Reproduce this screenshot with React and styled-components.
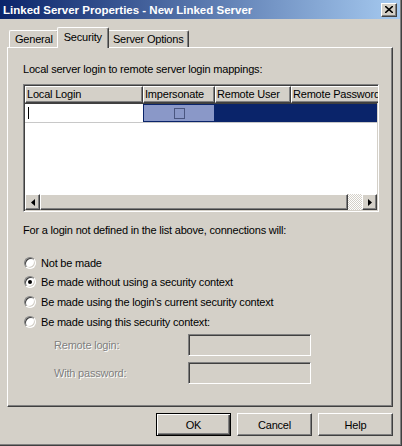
import React from 'react'
import styled, { createGlobalStyle, css } from 'styled-components'

const GlobalStyle = createGlobalStyle`
  html, body {
    margin: 0;
    padding: 0;
    background: #d4d0c8;
  }
  body {
    font-family: "Liberation Sans", Arial, sans-serif;
    font-size: 11px;
    letter-spacing: -0.2px;
    color: #000;
  }
`

const raised = css`
  border: 1px solid;
  border-color: #ffffff #404040 #404040 #ffffff;
  box-shadow: inset -1px -1px #808080, inset 1px 1px #d4d0c8;
`

const sunken = css`
  border: 1px solid;
  border-color: #808080 #ffffff #ffffff #808080;
  box-shadow: inset 1px 1px #404040, inset -1px -1px #d4d0c8;
`

const Window = styled.div`
  width: 402px;
  height: 446px;
  box-sizing: border-box;
  background: #d4d0c8;
  border-right: 1px solid #404040;
  border-bottom: 1px solid #404040;
  box-shadow: inset -1px -1px #808080;
  display: flex;
  flex-direction: column;
`

const TitleBar = styled.div`
  height: 19px;
  flex: none;
  background: linear-gradient(to right, #0a246a, #a6caf0);
  display: flex;
  align-items: center;
  justify-content: space-between;
  padding: 0 3px 0 3px;
  margin-right: 1px;
`

const Title = styled.span`
  color: #fff;
  font-weight: bold;
  font-size: 11.5px;
  letter-spacing: 0;
`

const CloseBtn = styled.div`
  ${raised};
  width: 14px;
  height: 12px;
  background: #d4d0c8;
  display: flex;
  align-items: center;
  justify-content: center;
`

const Body = styled.div`
  padding: 8px 7px 0 7px;
  display: flex;
  flex-direction: column;
`

const TabStrip = styled.div`
  display: flex;
  align-items: flex-end;
  height: 20px;
  padding-left: 2px;
  position: relative;
  z-index: 1;
`

const Tab = styled.div`
  box-sizing: border-box;
  height: ${p => (p.$active ? '21px' : '17px')};
  padding: 0 ${p => (p.$active ? '6px' : '5px')};
  margin: ${p => (p.$active ? '0 -2px -1px -2px' : '0')};
  display: flex;
  align-items: center;
  border-top: 1px solid #fff;
  border-left: 1px solid #fff;
  border-right: 1px solid #404040;
  box-shadow: inset -1px 0 #808080;
  border-radius: 2px 2px 0 0;
  background: #d4d0c8;
  position: relative;
  z-index: ${p => (p.$active ? 2 : 1)};
  padding-bottom: ${p => (p.$active ? '3px' : '0')};
`

const Panel = styled.div`
  box-sizing: border-box;
  height: 360px;
  width: 386px;
  border-top: 1px solid #fff;
  border-left: 1px solid #fff;
  border-right: 1px solid #404040;
  border-bottom: 1px solid #404040;
  box-shadow: inset -1px -1px #808080;
  padding: 15px 0 0 15px;
  display: flex;
  flex-direction: column;
`

const Label = styled.div`
  line-height: 13px;
  height: 13px;
  white-space: nowrap;
  margin-top: ${p => p.$top || 0}px;
`

const Grid = styled.div`
  ${sunken};
  box-sizing: border-box;
  width: 356px;
  height: 128px;
  margin-top: 8px;
  padding: 1px;
  display: flex;
  flex-direction: column;
  background: #fff;
  overflow: hidden;
`

const Row = styled.div`
  display: flex;
  flex: none;
`

const HeadCell = styled.div`
  ${raised};
  box-sizing: border-box;
  width: ${p => p.$w}px;
  flex: none;
  height: 17px;
  background: #d4d0c8;
  padding-left: 1px;
  line-height: 15px;
  white-space: nowrap;
  overflow: hidden;
`

const HeadLine = styled.div`
  height: 1px;
  background: #404040;
  flex: none;
`

const Cell = styled.div`
  box-sizing: border-box;
  width: ${p => p.$w}px;
  flex: ${p => (p.$fill ? '1' : 'none')};
  height: 18px;
  background: ${p => p.$bg};
  border: ${p => (p.$bd ? `1px solid ${p.$bd}` : 'none')};
  display: flex;
  align-items: center;
  justify-content: ${p => (p.$center ? 'center' : 'flex-start')};
`

const Caret = styled.div`
  width: 1px;
  height: 12px;
  background: #000;
  margin-left: 3px;
`

const CheckBox = styled.div`
  width: 9px;
  height: 9px;
  border: 1px solid #4a5680;
  background: #8a98c8;
`

const RowLine = styled.div`
  height: 1px;
  background: #c8c8c8;
  flex: none;
`

const Spacer = styled.div`
  flex: 1;
`

const ScrollBar = styled.div`
  height: 16px;
  flex: none;
  display: flex;
  background-color: #fff;
  background-image: conic-gradient(#d4d0c8 25%, #fff 0 50%, #d4d0c8 0 75%, #fff 0);
  background-size: 2px 2px;
`

const ScrollBtn = styled.div`
  ${raised};
  box-sizing: border-box;
  width: ${p => p.$w}px;
  flex: none;
  height: 16px;
  background: #d4d0c8;
  display: flex;
  align-items: center;
  justify-content: center;
`

const Track = styled.div`
  flex: 1;
`

const RadioList = styled.div`
  margin-top: 16px;
  display: flex;
  flex-direction: column;
`

const RadioRow = styled.div`
  display: flex;
  align-items: center;
  height: 19.6px;
  gap: 5px;
  padding-left: 1px;
`

const Radio = styled.div`
  box-sizing: border-box;
  width: 12px;
  height: 12px;
  border-radius: 50%;
  border: 1px solid;
  border-color: #808080 #ffffff #ffffff #808080;
  box-shadow: inset 1px 1px #404040, inset -1px -1px #d4d0c8;
  background: #fff;
  display: flex;
  align-items: center;
  justify-content: center;
  &::after {
    content: '';
    width: 4px;
    height: 4px;
    border-radius: 50%;
    background: ${p => (p.$on ? '#000' : 'transparent')};
  }
`

const Fields = styled.div`
  margin-top: 3px;
  display: grid;
  grid-template-columns: 134px 123px;
  row-gap: 6px;
  padding-left: 31px;
  align-items: center;
`

const DimLabel = styled.div`
  color: #808080;
  text-shadow: 1px 1px #fff;
`

const Input = styled.div`
  ${sunken};
  box-sizing: border-box;
  height: 22px;
  background: #d4d0c8;
`

const Buttons = styled.div`
  display: flex;
  justify-content: flex-end;
  gap: 6px;
  padding: 6px 1px 0 0;
`

const Button = styled.div`
  box-sizing: border-box;
  width: 75px;
  height: 23px;
  display: flex;
  align-items: center;
  justify-content: center;
  background: #d4d0c8;
  ${p =>
    p.$default
      ? css`
          border: 1px solid #000;
          box-shadow: inset 1px 1px #fff, inset -1px -1px #404040, inset -2px -2px #808080;
        `
      : raised};
`

const Arrow = ({ dir }) => (
  <svg width="4" height="7" viewBox="0 0 4 7">
    {dir === 'left' ? <path d="M4 0 L0 3.5 L4 7 Z" fill="#000" /> : <path d="M0 0 L4 3.5 L0 7 Z" fill="#000" />}
  </svg>
)

const columns = [
  { title: 'Local Login', w: 118 },
  { title: 'Impersonate', w: 72 },
  { title: 'Remote User', w: 76 },
  { title: 'Remote Password', w: 100 },
]

const options = [
  'Not be made',
  'Be made without using a security context',
  "Be made using the login's current security context",
  'Be made using this security context:',
]

export default function App() {
  return (
    <>
      <GlobalStyle />
      <Window>
        <TitleBar>
          <Title>Linked Server Properties - New Linked Server</Title>
          <CloseBtn>
            <svg width="8" height="7" viewBox="0 0 8 7">
              <path d="M0 0 L8 7 M8 0 L0 7" stroke="#000" strokeWidth="1.6" />
            </svg>
          </CloseBtn>
        </TitleBar>
        <Body>
          <TabStrip>
            <Tab>General</Tab>
            <Tab $active>Security</Tab>
            <Tab>Server Options</Tab>
          </TabStrip>
          <Panel>
            <Label>Local server login to remote server login mappings:</Label>
            <Grid>
              <Row>
                {columns.map(c => (
                  <HeadCell key={c.title} $w={c.w}>{c.title}</HeadCell>
                ))}
              </Row>
              <HeadLine />
              <Row>
                <Cell $w={118} $bg="#fff">
                  <Caret />
                </Cell>
                <Cell $w={72} $bg="#8a98c8" $bd="#0a246a" $center>
                  <CheckBox />
                </Cell>
                <Cell $fill $bg="#0a246a" />
              </Row>
              <RowLine />
              <Spacer />
              <ScrollBar>
                <ScrollBtn $w={15}>
                  <Arrow dir="left" />
                </ScrollBtn>
                <ScrollBtn $w={308} />
                <Track />
                <ScrollBtn $w={15}>
                  <Arrow dir="right" />
                </ScrollBtn>
              </ScrollBar>
            </Grid>
            <Label $top={12}>For a login not defined in the list above, connections will:</Label>
            <RadioList>
              {options.map((o, i) => (
                <RadioRow key={o}>
                  <Radio $on={i === 1} />
                  <span>{o}</span>
                </RadioRow>
              ))}
            </RadioList>
            <Fields>
              <DimLabel>Remote login:</DimLabel>
              <Input />
              <DimLabel>With password:</DimLabel>
              <Input />
            </Fields>
          </Panel>
          <Buttons>
            <Button $default>OK</Button>
            <Button>Cancel</Button>
            <Button>Help</Button>
          </Buttons>
        </Body>
      </Window>
    </>
  )
}
